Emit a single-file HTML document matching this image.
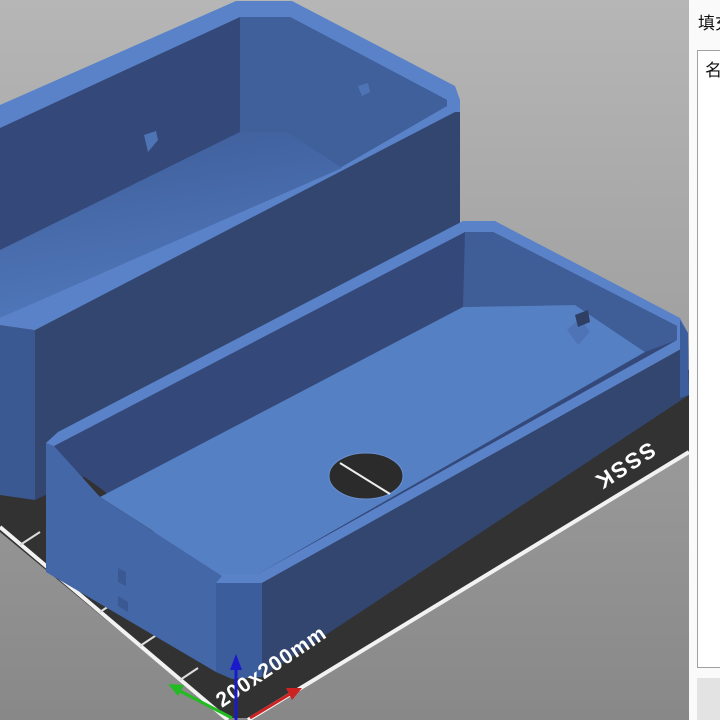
<!DOCTYPE html>
<html><head><meta charset="utf-8"><style>
html,body{margin:0;padding:0;width:720px;height:720px;overflow:hidden}
svg{display:block}
text{font-family:"Liberation Sans","Noto Sans CJK SC",sans-serif}
</style></head><body>
<svg width="720" height="720" viewBox="0 0 720 720" xmlns="http://www.w3.org/2000/svg">
<defs>
<linearGradient id="bg" x1="0" y1="0" x2="0" y2="1">
<stop offset="0" stop-color="#b6b6b6"/><stop offset="1" stop-color="#888"/>
</linearGradient>
<linearGradient id="fl" x1="0" y1="0" x2="0.3" y2="1">
<stop offset="0" stop-color="#3e5c98"/><stop offset="1" stop-color="#5078bb"/>
</linearGradient>
</defs>
<rect width="720" height="720" fill="url(#bg)"/>
<!-- bed -->
<polygon points="0,470 689,370 689,452 250,718 225,718 0,532" fill="#323232"/>
<line x1="0" y1="527" x2="228" y2="720" stroke="#f2f2f2" stroke-width="4"/>
<line x1="248" y1="720" x2="689" y2="452" stroke="#f2f2f2" stroke-width="4"/>
<g stroke="#ddd" stroke-width="2">
<line x1="20" y1="545" x2="40" y2="532"/><line x1="60" y1="578" x2="78" y2="566"/>
<line x1="100" y1="612" x2="118" y2="600"/><line x1="140" y1="646" x2="158" y2="634"/>
<line x1="180" y1="680" x2="198" y2="668"/>
</g>
<!-- back box -->
<polygon points="0,105 236,1 292,1 455,86 460,100 460,112 35,330 0,325" fill="#5a82c8"/>
<polygon points="0,128 240,17 290,17 447,100 447,106 0,316" fill="#34497a"/>
<polygon points="240,17 290,17 447,100 447,106 340,168 287,132 240,132" fill="#40609b"/>
<polygon points="0,250 240,132 287,132 342,168 0,318" fill="url(#fl)"/>
<polygon points="144,135 156,131 158,140 148,152" fill="#4f74b6"/>
<polygon points="358,86 368,83 370,92 362,96" fill="#4f74b6"/>
<polygon points="455,112 460,112 460,300 35,500 35,330" fill="#32466f"/>
<polygon points="0,325 35,330 35,500 0,495" fill="#3a5892"/>
<!-- small box -->
<polygon points="46,443 58,432 463,221 495,221 680,318 688,333 688,345 262,583 216,583" fill="#5a82c8"/>
<polygon points="54,446 465,232 493,232 677,326 677,340 258,574 220,574 54,455" fill="#34497a"/>
<polygon points="493,232 677,326 677,340 645,352 575,305 463,307 465,232" fill="#3f5d96"/>
<polygon points="100,497 463,307 575,305 645,352 258,574 220,574" fill="#5580c4"/>
<polygon points="567,330 580,318 590,332 578,345" fill="#4f74b6"/>
<polygon points="575,315 588,310 590,322 578,327" fill="#2e3f63"/>
<ellipse cx="366" cy="476" rx="37" ry="23" fill="#2b2b2b" stroke="#6a8fd0" stroke-width="1"/>
<line x1="340" y1="463" x2="390" y2="494" stroke="#eee" stroke-width="2"/>
<polygon points="46,443 54,446 100,497 222,576 216,583 216,672 46,572" fill="#4467a8"/>
<polygon points="118,568 126,572 126,586 118,582" fill="#3a5892"/>
<polygon points="118,596 128,602 128,612 118,606" fill="#3a5892"/>
<polygon points="216,583 262,583 262,677 232,679 216,672" fill="#3c5d9b"/>
<polygon points="262,583 688,345 689,395 262,677" fill="#32466f"/>
<polygon points="680,320 688,333 689,395 680,398" fill="#3d5e9c"/>
<text x="0" y="0" fill="#fff" font-weight="bold" font-size="21" letter-spacing="1" transform="translate(222,708) rotate(-34)">200x200mm</text>
<text x="0" y="0" fill="#fff" font-weight="bold" font-size="22" letter-spacing="2" text-anchor="middle" dominant-baseline="central" transform="translate(625,466) rotate(147)">SSSK</text>
<!-- axes -->
<line x1="236" y1="720" x2="236" y2="668" stroke="#1a1acc" stroke-width="3"/>
<polygon points="236,654 230,670 242,670" fill="#1a1acc"/>
<line x1="232" y1="718" x2="178" y2="690" stroke="#22bb22" stroke-width="3"/>
<polygon points="168,684 184,685 178,696" fill="#22bb22"/>
<line x1="250" y1="718" x2="290" y2="694" stroke="#cc2222" stroke-width="3"/>
<polygon points="302,688 286,688 292,700" fill="#cc2222"/>
<!-- panel -->
<rect x="689" y="0" width="31" height="720" fill="#fafafa"/>
<text x="698" y="29" font-size="17" fill="#111">填充</text>
<rect x="697.5" y="50.5" width="40" height="617" fill="#fff" stroke="#a0a0a0"/>
<text x="705" y="76" font-size="17" fill="#111">名称</text>
<rect x="697" y="678" width="23" height="42" fill="#e3e3e3"/>
</svg>
</body></html>
